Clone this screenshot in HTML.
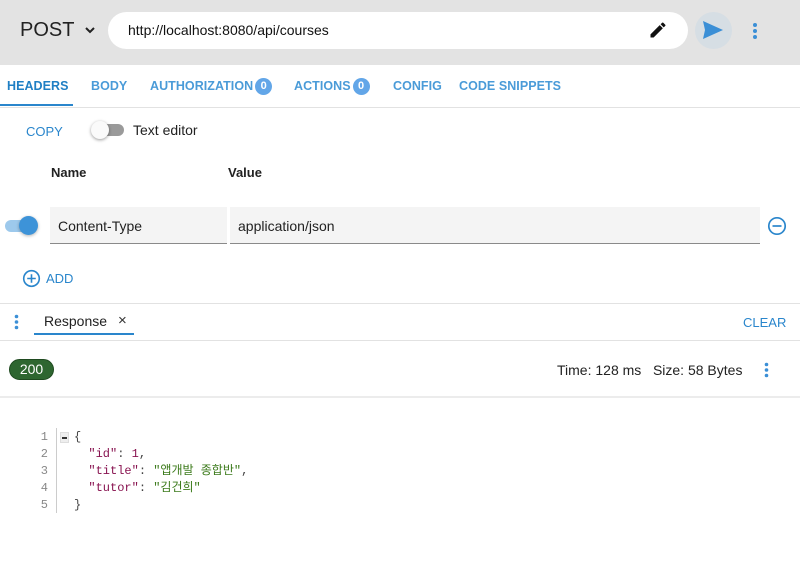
<!DOCTYPE html>
<html><head><meta charset="utf-8"><style>
*{box-sizing:border-box;margin:0;padding:0}
body{width:800px;height:561px;background:#fff;font-family:"Liberation Sans","Noto Sans CJK KR",sans-serif;position:relative;overflow:hidden;color:#222}
.a{position:absolute}
.top{left:0;top:0;width:800px;height:65px;background:#e3e3e3}
.tab{position:absolute;top:77px;height:18px;display:flex;align-items:center;font-size:12.5px;font-weight:bold;color:#4a9bd8;letter-spacing:0.05px}
.badge{display:inline-block;width:17px;height:17px;border-radius:50%;background:#62a6e8;color:#fff;font-size:11px;text-align:center;line-height:17px;margin-left:2px}
.code{font-family:"Liberation Mono","Noto Sans CJK KR",monospace;font-size:12px;line-height:17px}
</style></head><body>
<div class="a top"></div>
<div class="a" style="left:20px;top:19px;font-size:20px;color:#222">POST</div>
<svg class="a" style="left:83px;top:23px" width="14" height="14" viewBox="0 0 14 14"><path d="M3 5l4 4 4-4" stroke="#222" stroke-width="2" fill="none"/></svg>
<div class="a" style="left:108px;top:12px;width:580px;height:37px;background:#fff;border-radius:19px"></div>
<div class="a" style="left:128px;top:22px;font-size:14px;color:#111">http://localhost:8080/api/courses</div>
<svg class="a" style="left:648px;top:20px" width="20" height="20" viewBox="0 0 24 24"><path d="M3 17.25V21h3.75L17.81 9.94l-3.75-3.75L3 17.25zM20.71 7.04a1 1 0 000-1.41l-2.34-2.34a1 1 0 00-1.41 0l-1.830 1.83 3.75 3.75 1.83-1.83z" fill="#111"/></svg>
<div class="a" style="left:695px;top:12px;width:37px;height:37px;border-radius:50%;background:#d6dee4"></div>
<svg class="a" style="left:702px;top:20px" width="22" height="20" viewBox="0 0 22 20"><path d="M1 1L21 10 1 19 3 10z" fill="#3b8fd6"/></svg>
<svg class="a" style="left:752px;top:22px" width="6" height="18"><circle cx="3" cy="3" r="2" fill="#3b8fd6"/><circle cx="3" cy="9" r="2" fill="#3b8fd6"/><circle cx="3" cy="15" r="2" fill="#3b8fd6"/></svg>

<div class="tab" style="left:7px;color:#1f7fc4">HEADERS</div>
<div class="a" style="left:0;top:104px;width:73px;height:2px;background:#2a86cc"></div>
<div class="tab" style="left:91px">BODY</div>
<div class="tab" style="left:150px">AUTHORIZATION<span class="badge">0</span></div>
<div class="tab" style="left:294px">ACTIONS<span class="badge">0</span></div>
<div class="tab" style="left:393px">CONFIG</div>
<div class="tab" style="left:459px">CODE SNIPPETS</div>
<div class="a" style="left:0;top:107px;width:800px;height:1px;background:#e2e2e2"></div>

<div class="a" style="left:26px;top:124px;font-size:13px;color:#2a86cc">COPY</div>
<div class="a" style="left:95px;top:124px;width:29px;height:12px;border-radius:6px;background:#9a9a9a"></div>
<div class="a" style="left:91px;top:121px;width:18px;height:18px;border-radius:50%;background:#fafafa;box-shadow:0 1px 3px rgba(0,0,0,.4)"></div>
<div class="a" style="left:133px;top:122px;font-size:14px">Text editor</div>

<div class="a" style="left:51px;top:165px;font-size:13px;font-weight:bold">Name</div>
<div class="a" style="left:228px;top:165px;font-size:13px;font-weight:bold">Value</div>

<div class="a" style="left:5px;top:220px;width:30px;height:12px;border-radius:6px;background:#9dc9ec"></div>
<div class="a" style="left:19px;top:216px;width:19px;height:19px;border-radius:50%;background:#3d93d8;box-shadow:0 1px 3px rgba(0,0,0,.3)"></div>
<div class="a" style="left:50px;top:207px;width:177px;height:37px;background:#f4f4f4;border-bottom:1px solid #8a8a8a"></div>
<div class="a" style="left:58px;top:218px;font-size:14px">Content-Type</div>
<div class="a" style="left:230px;top:207px;width:530px;height:37px;background:#f4f4f4;border-bottom:1px solid #8a8a8a"></div>
<div class="a" style="left:238px;top:218px;font-size:14px">application/json</div>
<svg class="a" style="left:767px;top:216px" width="20" height="20" viewBox="0 0 20 20"><circle cx="10" cy="10" r="8.2" stroke="#2a86cc" stroke-width="1.7" fill="none"/><path d="M5.5 10h9" stroke="#2a86cc" stroke-width="1.7"/></svg>

<svg class="a" style="left:22px;top:269px" width="19" height="19" viewBox="0 0 20 20"><circle cx="10" cy="10" r="8.2" stroke="#2a86cc" stroke-width="1.7" fill="none"/><path d="M5.5 10h9M10 5.5v9" stroke="#2a86cc" stroke-width="1.7"/></svg>
<div class="a" style="left:46px;top:271px;font-size:13px;color:#2a86cc">ADD</div>
<div class="a" style="left:0;top:303px;width:800px;height:1px;background:#e2e2e2"></div>

<svg class="a" style="left:14px;top:314px" width="5" height="16"><circle cx="2.5" cy="2.5" r="1.8" fill="#3b8fd6"/><circle cx="2.5" cy="8" r="1.8" fill="#3b8fd6"/><circle cx="2.5" cy="13.5" r="1.8" fill="#3b8fd6"/></svg>
<div class="a" style="left:44px;top:313px;font-size:14px">Response</div>
<div class="a" style="left:118px;top:312px;font-size:15px;color:#333">×</div>
<div class="a" style="left:34px;top:333px;width:100px;height:2px;background:#2a86cc"></div>
<div class="a" style="left:743px;top:315px;font-size:13px;color:#2a86cc">CLEAR</div>
<div class="a" style="left:0;top:340px;width:800px;height:1px;background:#e2e2e2"></div>

<div class="a" style="left:9px;top:359px;width:45px;height:21px;border-radius:11px;background:#2e6630;border:1px solid #1f4a20;color:#fff;font-size:14px;text-align:center;line-height:19px">200</div>
<div class="a" style="left:557px;top:362px;font-size:14px">Time: 128 ms&nbsp;&nbsp; Size: 58 Bytes</div>
<svg class="a" style="left:764px;top:362px" width="5" height="16"><circle cx="2.5" cy="2.5" r="1.8" fill="#3b8fd6"/><circle cx="2.5" cy="8" r="1.8" fill="#3b8fd6"/><circle cx="2.5" cy="13.5" r="1.8" fill="#3b8fd6"/></svg>
<div class="a" style="left:0;top:396px;width:800px;height:2px;background:#ececec"></div>

<div class="a code" style="left:30px;top:429px;width:18px;text-align:right;color:#888">1<br>2<br>3<br>4<br>5</div>
<div class="a" style="left:56px;top:428px;width:1px;height:85px;background:#ccc"></div>
<div class="a" style="left:60px;top:432px;width:9px;height:11px;background:#eee;border:1px solid #ddd"></div>
<div class="a" style="left:62px;top:437px;width:5px;height:2px;background:#333"></div>
<div class="a code" style="left:74px;top:429px;color:#444;white-space:pre">{
  <span style="color:#881350">"id"</span>: <span style="color:#881350">1</span>,
  <span style="color:#881350">"title"</span>: <span style="color:#3b7a1a">"앱개발 종합반"</span>,
  <span style="color:#881350">"tutor"</span>: <span style="color:#3b7a1a">"김건희"</span>
}</div>
</body></html>
